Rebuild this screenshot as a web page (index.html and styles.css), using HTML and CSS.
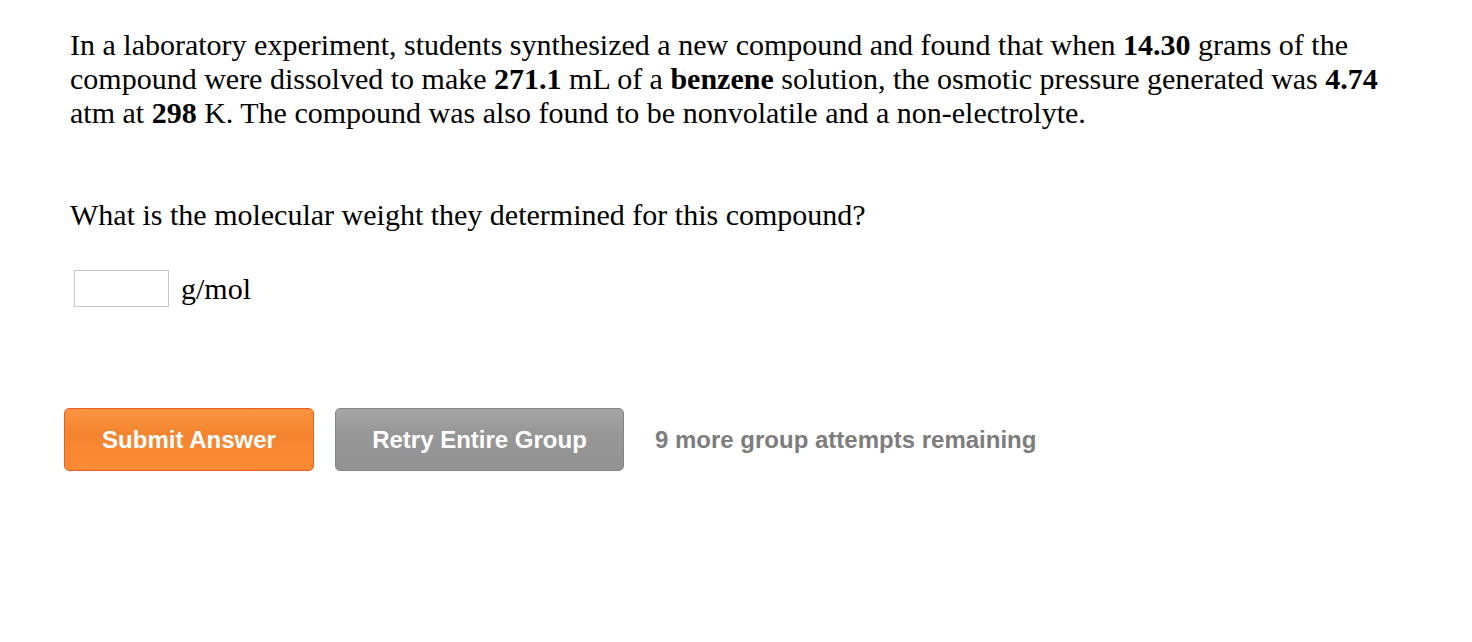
FILE: index.html
```html
<!DOCTYPE html>
<html>
<head>
<meta charset="utf-8">
<link rel="stylesheet" href="styles.css">
</head>
<body>
<div class="page">
  <p class="intro">In a laboratory experiment, students synthesized a new compound and found that when <b>14.30</b> grams of the compound were dissolved to make <b>271.1</b> mL of a <b>benzene</b> solution, the osmotic pressure generated was <b>4.74</b> atm at <b>298</b> K. The compound was also found to be nonvolatile and a non-electrolyte.</p>
  <p class="question">What is the molecular weight they determined for this compound?</p>
  <div class="answer-row">
    <input class="answer" type="text">
    <span class="unit">g/mol</span>
  </div>
  <div class="actions">
    <button class="btn btn-submit">Submit Answer</button>
    <button class="btn btn-retry">Retry Entire Group</button>
    <span class="attempts">9 more group attempts remaining</span>
  </div>
</div>
</body>
</html>
```
FILE: styles.css
```css
html, body {
  margin: 0;
  padding: 0;
  background: #fff;
}
.page {
  padding: 28px 0 0 70px;
  width: 1330px;
  font-family: "Liberation Serif", "Times New Roman", serif;
  font-size: 30px;
  line-height: 34px;
  color: #000;
}
.intro {
  margin: 0;
}
.question {
  margin: 68px 0 0 0;
}
.answer-row {
  display: flex;
  align-items: center;
  gap: 12px;
  margin-top: 38px;
  padding-left: 4px;
}
.answer {
  width: 95px;
  height: 37px;
  box-sizing: border-box;
  border: 1px solid #c8c8c8;
  margin: 0;
  padding: 0;
}
.unit {
  line-height: 37px;
}
.actions {
  display: flex;
  align-items: center;
  margin-top: 101px;
  margin-left: -6px;
  font-family: "Liberation Sans", Arial, sans-serif;
}
.btn {
  height: 63px;
  box-sizing: border-box;
  border-radius: 5px;
  font-family: "Liberation Sans", Arial, sans-serif;
  font-weight: bold;
  font-size: 24px;
  color: #fff;
  padding: 0;
  cursor: pointer;
}
.btn-submit {
  width: 250px;
  background: linear-gradient(#fa9440, #f48530 40%, #fb8a33);
  border: 1.5px solid #ec5d24;
}
.btn-retry {
  width: 289px;
  margin-left: 21px;
  background: linear-gradient(#a6a6a6, #979797 40%, #939393);
  border: 1.5px solid #858585;
}
.attempts {
  margin-left: 31px;
  font-size: 24px;
  font-weight: bold;
  color: #7d7d7d;
}
```
